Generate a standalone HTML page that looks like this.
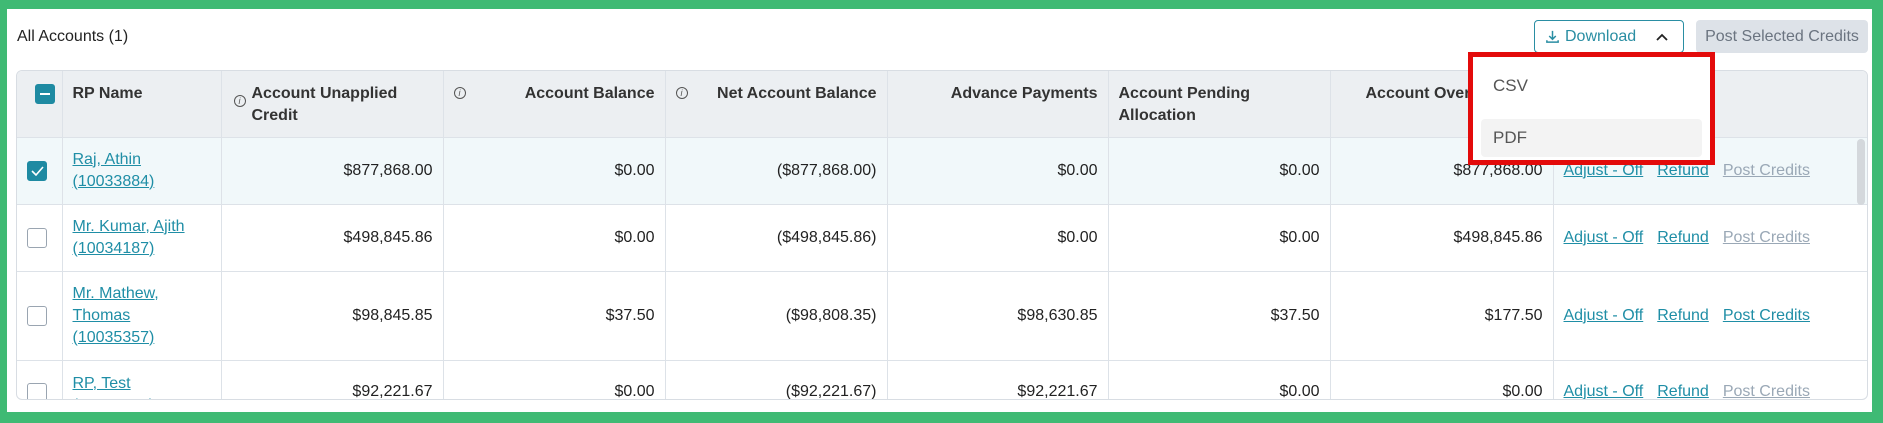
<!DOCTYPE html>
<html><head><meta charset="utf-8"><style>
*{box-sizing:border-box;margin:0;padding:0}
html,body{width:1883px;height:423px;overflow:hidden;background:#3fba74;font-family:"Liberation Sans",sans-serif}
.page{position:absolute;left:7px;top:9px;width:1865px;height:403px;background:#fff;overflow:hidden}
.title{position:absolute;left:10px;top:19px;font-size:16px;color:#222}
.dl{position:absolute;left:1527px;top:11px;width:150px;height:33px;border:1px solid #2a8ea3;border-radius:4px;color:#2a8ea3;font-size:16px;line-height:31px;padding-left:30px}
.dl svg{position:absolute}
.psc{position:absolute;left:1689px;top:11px;width:172px;height:33px;background:#dde2e8;border-radius:4px;color:#6b7480;font-size:16px;line-height:33px;text-align:center}
.tbl{position:absolute;left:9px;top:61px;width:1852px;height:330px;border:1px solid #d8dde3;border-radius:6px;overflow:hidden}
table{border-collapse:collapse;table-layout:fixed;width:1852px;font-size:16px;color:#222}
td,th{border-right:1px solid #dde2e8;border-bottom:1px solid #dde2e8;padding:0 10px;vertical-align:middle}
th{background:#eceff2;font-weight:bold;color:#333;height:66px;vertical-align:top;padding-top:12px;line-height:22px;white-space:nowrap}
th.r{text-align:right}th.l{text-align:left}
td{text-align:right;height:67px}
td.n{text-align:left;line-height:22px}
a{color:#1f8ea6;text-decoration:underline}
.sel td{background:#f1f8fa}
.cb{display:inline-block;width:20px;height:20px;border:1px solid #9aa5b1;border-radius:3px;background:#fff;vertical-align:middle}
.cb.on{background:#1e8aa2;border-color:#1e8aa2;position:relative}
.i{display:inline-block;width:12px;height:12px;border:1px solid #555;border-radius:50%;font-size:9px;line-height:10px;text-align:center;font-weight:normal;font-style:italic;color:#555;vertical-align:top;margin-top:4px}
.act{text-align:left;white-space:nowrap}
.act a{margin-right:14px}
.act .g{color:#9aa8b6}
.menu{position:absolute;left:1461px;top:43px;width:247px;height:113px;border:5px solid #e30b0b;background:#fff}
.menu .c{position:absolute;left:20px;top:19px;font-size:17px;color:#555}
.menu .p{position:absolute;left:8px;top:62px;width:221px;height:38px;background:#f3f3f3;border-radius:4px;font-size:17px;color:#555;padding-left:12px;line-height:38px}
.sb{position:absolute;left:1840px;top:68px;width:8px;height:66px;background:#d4d8dc;border-radius:4px}
</style></head><body>
<div class="page">
<div class="title">All Accounts (1)</div>
<div class="dl"><svg style="left:10px;top:8px" width="15" height="15" viewBox="0 0 16 16" fill="none" stroke="#2a8ea3" stroke-width="1.6"><path d="M8 2v9M4.5 7.5L8 11l3.5-3.5M2 12v2h12v-2"/></svg>Download<svg style="left:120px;top:11px" width="14" height="10" viewBox="0 0 14 10" fill="none" stroke="#222" stroke-width="1.8"><path d="M2 8l5-5 5 5"/></svg></div>
<div class="psc">Post Selected Credits</div>
<div class="tbl">
<table>
<colgroup><col style="width:45px"><col style="width:159px"><col style="width:222px"><col style="width:222px"><col style="width:222px"><col style="width:221px"><col style="width:222px"><col style="width:223px"><col style="width:316px"></colgroup>
<tr><th style="padding:12px 0 0 11px"><span class="cb on" style="margin-top:0"><span style="position:absolute;left:4px;top:8px;width:10px;height:2px;background:#fff"></span></span></th>
<th class="l">RP Name</th>
<th class="l" style="padding-left:12px"><span class="i" style="margin-top:12px;float:left;margin-right:6px">i</span>Account Unapplied<br>Credit</th>
<th class="r"><span class="i" style="float:left">i</span>Account Balance</th>
<th class="r"><span class="i" style="float:left">i</span>Net Account Balance</th>
<th class="r">Advance Payments</th>
<th class="l">Account Pending<br>Allocation</th>
<th class="l" style="padding-left:35px">Account Overpayment</th>
<th></th></tr>
<tr class="sel"><td style="padding:0 0 0 10px;text-align:left"><span class="cb on"><svg style="position:absolute;left:3px;top:4px" width="13" height="10" viewBox="0 0 13 10" fill="none" stroke="#fff" stroke-width="1.6"><path d="M1 5l4 4 7-8"/></svg></span></td><td class="n"><a>Raj, Athin<br>(10033884)</a></td><td>$877,868.00</td><td>$0.00</td><td>($877,868.00)</td><td>$0.00</td><td>$0.00</td><td>$877,868.00</td><td class="act"><a>Adjust - Off</a><a>Refund</a><a class="g">Post Credits</a></td></tr>
<tr><td style="padding:0 0 0 10px;text-align:left"><span class="cb"></span></td><td class="n"><a>Mr. Kumar, Ajith<br>(10034187)</a></td><td>$498,845.86</td><td>$0.00</td><td>($498,845.86)</td><td>$0.00</td><td>$0.00</td><td>$498,845.86</td><td class="act"><a>Adjust - Off</a><a>Refund</a><a class="g">Post Credits</a></td></tr>
<tr><td style="height:89px;padding:0 0 0 10px;text-align:left"><span class="cb"></span></td><td class="n"><a>Mr. Mathew,<br>Thomas<br>(10035357)</a></td><td>$98,845.85</td><td>$37.50</td><td>($98,808.35)</td><td>$98,630.85</td><td>$37.50</td><td>$177.50</td><td class="act"><a>Adjust - Off</a><a>Refund</a><a>Post Credits</a></td></tr>
<tr><td style="padding:0 0 0 10px;text-align:left;vertical-align:top;padding-top:22px"><span class="cb"></span></td><td class="n" style="vertical-align:top;padding-top:12px"><a>RP, Test<br>(10036031)</a></td><td style="vertical-align:top;padding-top:22px">$92,221.67</td><td style="vertical-align:top;padding-top:22px">$0.00</td><td style="vertical-align:top;padding-top:22px">($92,221.67)</td><td style="vertical-align:top;padding-top:22px">$92,221.67</td><td style="vertical-align:top;padding-top:22px">$0.00</td><td style="vertical-align:top;padding-top:22px">$0.00</td><td class="act" style="vertical-align:top;padding-top:22px"><a>Adjust - Off</a><a>Refund</a><a class="g">Post Credits</a></td></tr>
</table>
<div class="sb"></div>
</div>
<div class="menu"><div class="c">CSV</div><div class="p">PDF</div></div>
</div>
</body></html>
